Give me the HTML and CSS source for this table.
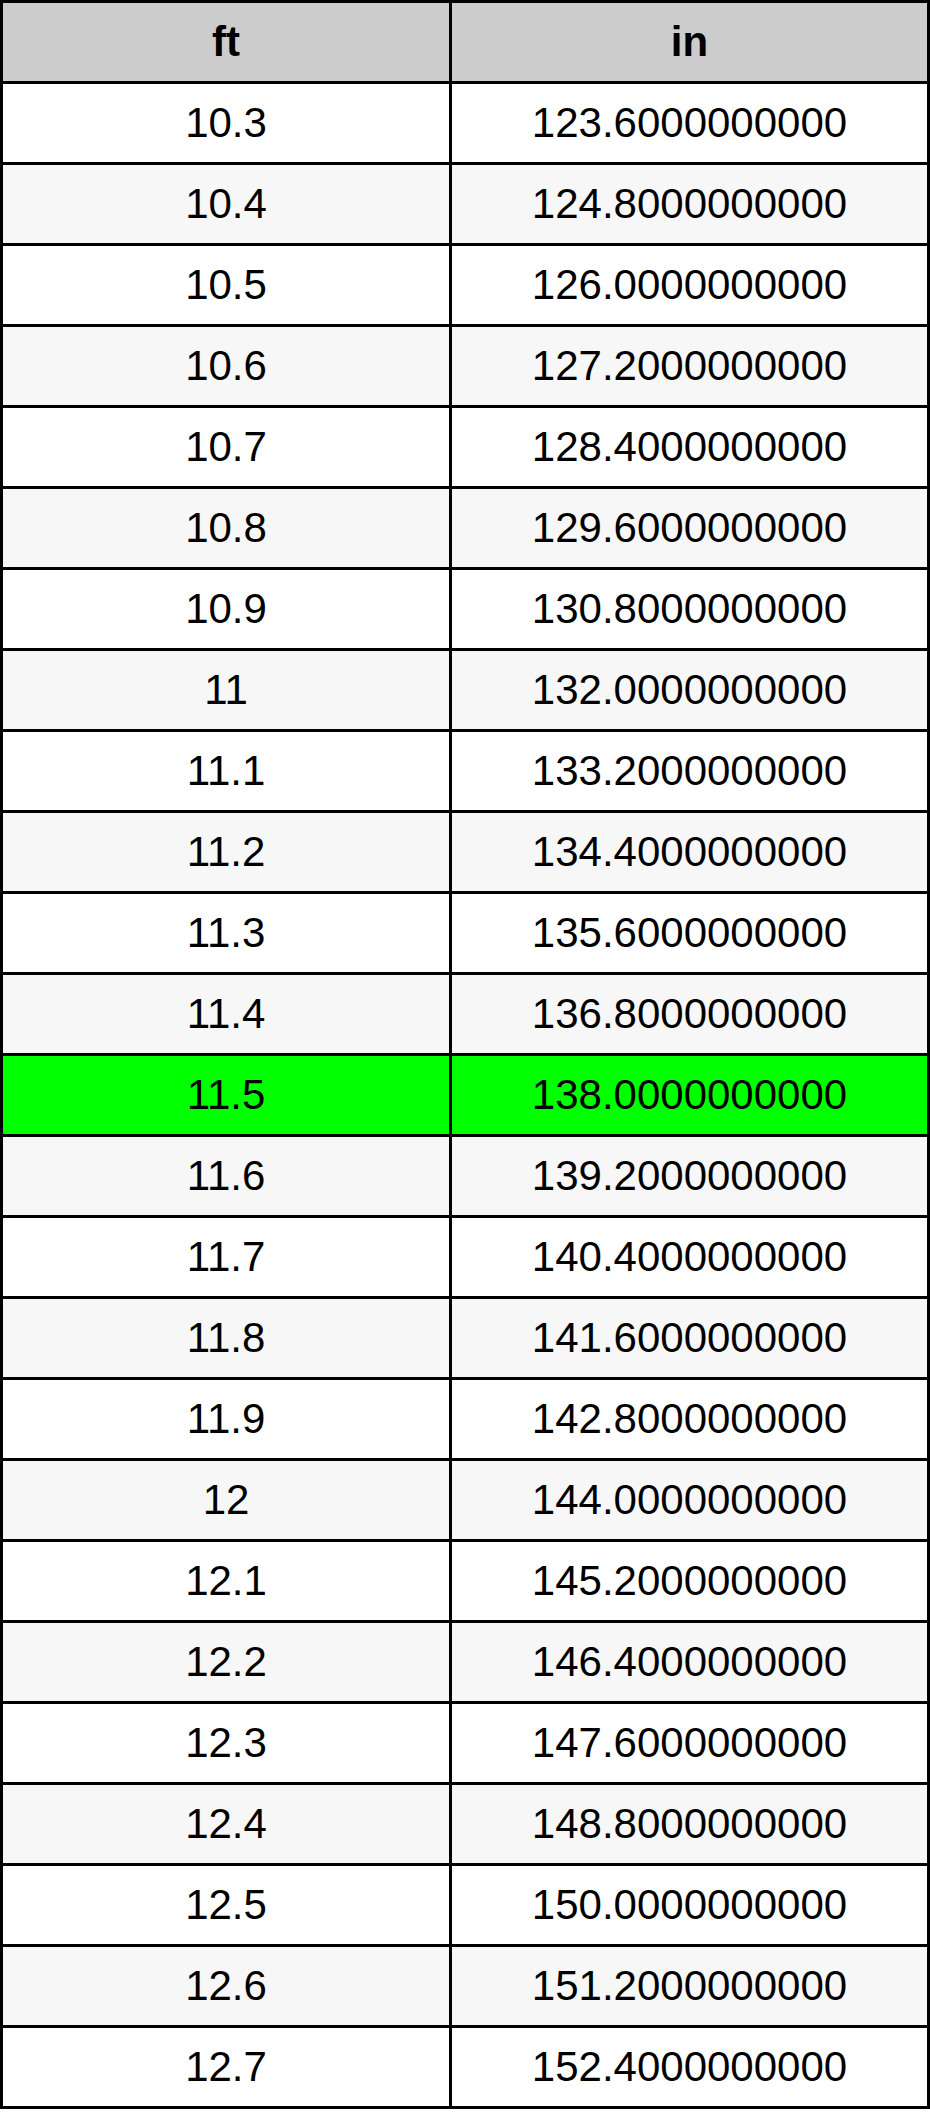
FILE: index.html
```html
<!DOCTYPE html>
<html>
<head>
<meta charset="utf-8">
<link rel="stylesheet" href="styles.css">
</head>
<body>
<table class="conv">
<colgroup><col class="c1"><col class="c2"></colgroup>
<thead>
<tr><th>ft</th><th>in</th></tr>
</thead>
<tbody>
<tr><td>10.3</td><td>123.6000000000</td></tr>
<tr><td>10.4</td><td>124.8000000000</td></tr>
<tr><td>10.5</td><td>126.0000000000</td></tr>
<tr><td>10.6</td><td>127.2000000000</td></tr>
<tr><td>10.7</td><td>128.4000000000</td></tr>
<tr><td>10.8</td><td>129.6000000000</td></tr>
<tr><td>10.9</td><td>130.8000000000</td></tr>
<tr><td>11</td><td>132.0000000000</td></tr>
<tr><td>11.1</td><td>133.2000000000</td></tr>
<tr><td>11.2</td><td>134.4000000000</td></tr>
<tr><td>11.3</td><td>135.6000000000</td></tr>
<tr><td>11.4</td><td>136.8000000000</td></tr>
<tr class="hl"><td>11.5</td><td>138.0000000000</td></tr>
<tr><td>11.6</td><td>139.2000000000</td></tr>
<tr><td>11.7</td><td>140.4000000000</td></tr>
<tr><td>11.8</td><td>141.6000000000</td></tr>
<tr><td>11.9</td><td>142.8000000000</td></tr>
<tr><td>12</td><td>144.0000000000</td></tr>
<tr><td>12.1</td><td>145.2000000000</td></tr>
<tr><td>12.2</td><td>146.4000000000</td></tr>
<tr><td>12.3</td><td>147.6000000000</td></tr>
<tr><td>12.4</td><td>148.8000000000</td></tr>
<tr><td>12.5</td><td>150.0000000000</td></tr>
<tr><td>12.6</td><td>151.2000000000</td></tr>
<tr><td>12.7</td><td>152.4000000000</td></tr>
</tbody>
</table>
</body>
</html>
```
FILE: styles.css
```css
html, body {
  margin: 0;
  padding: 0;
  background: #ffffff;
}
.conv {
  width: 930px;
  border-collapse: collapse;
  table-layout: fixed;
  font-family: "Liberation Sans", Arial, sans-serif;
  font-size: 42px;
  color: #000;
}
.c1 { width: 449px; }
.c2 { width: 478px; }
.conv th, .conv td {
  border: 3px solid #000;
  height: 78px;
  padding: 0;
  text-align: center;
  vertical-align: middle;
  line-height: 48px;
}
.conv th {
  background: #cccccc;
  font-weight: bold;
}
.conv tbody tr:nth-child(even) td {
  background: #f7f7f7;
}
.conv tbody tr.hl td {
  background: #00ff00;
}
```
